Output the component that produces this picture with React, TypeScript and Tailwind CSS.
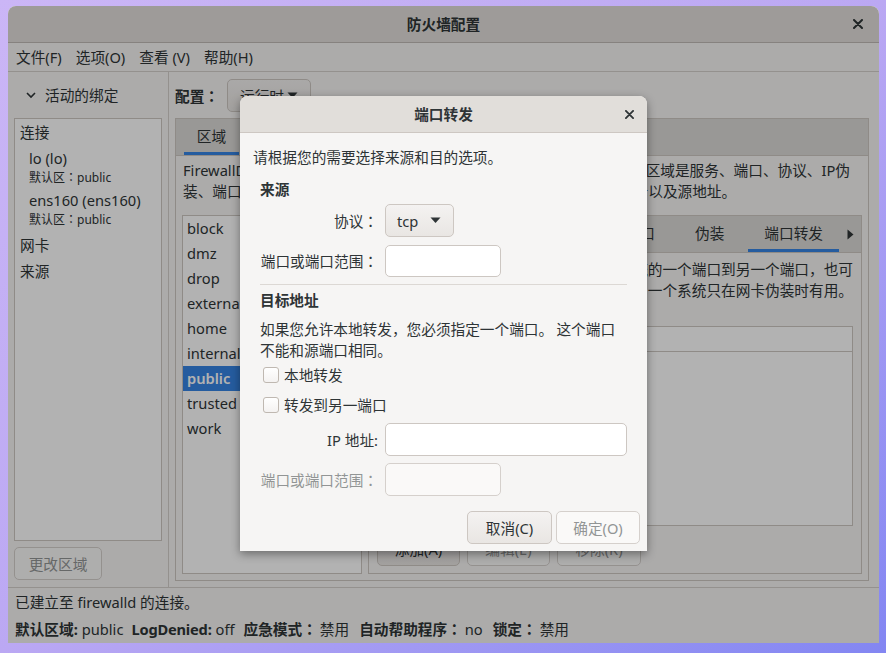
import React from 'react';

const zones = ['block', 'dmz', 'drop', 'external', 'home', 'internal', 'public', 'trusted', 'work'];
const innerTabs = ['服务', '端口', '协议', '源端口', '伪装', '端口转发'];

// labels with a full-width colon: the TC face centres "：" like the reference
const TC = "[font-family:'Noto_Sans_CJK_TC',sans-serif]";
const SC = "[font-family:'Noto_Sans_CJK_SC',sans-serif]";

const CloseIcon: React.FC<{ size?: number }> = ({ size = 10 }) => (
    <svg width={size} height={size} viewBox="0 0 10 10">
        <path d="M1 1 L9 9 M9 1 L1 9" stroke="#2e3436" strokeWidth="2" strokeLinecap="round" />
    </svg>
);

const DownTriangle: React.FC = () => (
    <svg width="11" height="7" viewBox="0 0 11 7">
        <path d="M0.5 0.5 L10.5 0.5 L5.5 6 Z" fill="#2e3436" />
    </svg>
);

const Button: React.FC<{ label: string; disabled?: boolean; className?: string }> = ({ label, disabled, className }) => (
    <div
        className={`flex shrink-0 items-center justify-center rounded-[5px] border ${disabled
            ? 'border-[#d5d0cc] bg-[#faf9f8] text-[#929595]'
            : 'border-[#cdc7c2] bg-gradient-to-b from-[#f4f2f1] to-[#e9e6e3] text-[#2e3436]'
            } ${className ?? ''}`}
    >
        {label}
    </div>
);

const Checkbox: React.FC<{ label: string }> = ({ label }) => (
    <div className="flex h-[24px] items-center">
        <div className="ml-[3px] h-[16px] w-[16px] rounded-[3px] border border-[#bfb8b1] bg-gradient-to-b from-white to-[#f4f2f1]" />
        <span className="ml-[5px]">{label}</span>
    </div>
);

export default function App() {
    return (
        <div className="relative h-[653px] w-[886px] overflow-hidden bg-gradient-to-br from-[#cbb6f6] via-[#bba8f3] to-[#8386f2] pl-[8px] pt-[6px] text-[14.67px] text-[#2e3436] [font-family:'Noto_Sans','Noto_Sans_CJK_SC',sans-serif]">
            {/* Main window */}
            <div className="relative flex h-[637px] w-[871px] flex-col overflow-hidden rounded-t-[8px] bg-[#f6f5f4]">
                {/* Title bar */}
                <div className="relative flex h-[37px] shrink-0 items-center justify-center border-b border-[#c0bbb6] bg-[#e2dfdb]">
                    <span className="font-bold">防火墙配置</span>
                    <div className="absolute right-[16px] top-[13px]">
                        <CloseIcon />
                    </div>
                </div>

                {/* Menu */}
                <div className="flex h-[29px] shrink-0 items-center gap-[14px] border-b border-[#d5d0cc] pl-[8px]">
                    <span>文件(F)</span>
                    <span>选项(O)</span>
                    <span>查看 (V)</span>
                    <span>帮助(H)</span>
                </div>

                {/* Body */}
                <div className="flex h-[515px] shrink-0">
                    {/* Left pane */}
                    <div className="flex w-[161px] shrink-0 flex-col border-r border-[#d5d0cc]">
                        <div className="flex h-[46px] items-center pl-[18px]">
                            <svg width="10" height="7" viewBox="0 0 10 7">
                                <path d="M1 1 L5 5 L9 1" stroke="#2e3436" strokeWidth="1.6" fill="none" />
                            </svg>
                            <span className="ml-[9px]">活动的绑定</span>
                        </div>
                        <div className="mx-[6px] h-[423px] border border-[#cdc7c2] bg-white pl-[5px] pt-[3px]">
                            <div className="h-[20px] leading-[20px]">连接</div>
                            <div className="mt-[6px] h-[20px] pl-[9px] leading-[20px]">lo (lo)</div>
                            <div className="h-[18px] pl-[9px] text-[12px] leading-[18px]">
                                <span className={TC}>默认区：</span>public
                            </div>
                            <div className="mt-[4px] h-[20px] pl-[9px] leading-[20px]">ens160 (ens160)</div>
                            <div className="h-[18px] pl-[9px] text-[12px] leading-[18px]">
                                <span className={TC}>默认区：</span>public
                            </div>
                            <div className="mt-[7px] h-[20px] leading-[20px]">网卡</div>
                            <div className="mt-[6px] h-[20px] leading-[20px]">来源</div>
                        </div>
                        <Button label="更改区域" disabled className="ml-[6px] mt-[6px] h-[33px] w-[88px]" />
                    </div>

                    {/* Right pane */}
                    <div className="flex min-w-0 flex-1 flex-col pl-[6px] pr-[10px]">
                        <div className="mt-[7px] flex h-[33px] items-center">
                            <span className={`font-bold ${TC}`}>配置：</span>
                            <div className="ml-[8px] flex h-[33px] w-[84px] items-center justify-between rounded-[5px] border border-[#cdc7c2] bg-gradient-to-b from-[#f4f2f1] to-[#e9e6e3] px-[12px]">
                                <span>运行时</span>
                                <DownTriangle />
                            </div>
                        </div>

                        {/* Outer notebook */}
                        <div className="mt-[6px] flex h-[463px] flex-col border border-[#cdc7c2]">
                            <div className="flex h-[37px] shrink-0 border-b border-[#cdc7c2] bg-[#dcdad7]">
                                <div className="ml-[8px] flex w-[55px] flex-col">
                                    <div className="flex flex-1 items-center justify-center">区域</div>
                                    <div className="h-[3px] bg-[#3584e4]" />
                                </div>
                            </div>
                            <div className="flex min-h-0 flex-1 flex-col px-[6px] pb-[6px]">
                                <div className="mt-[4px] h-[21px] overflow-hidden whitespace-nowrap pl-[1px] leading-[21px]">
                                    FirewallD 区域定义了绑定的网络连接、网卡以及源地址的可信任程度。区域是服务、端口、协议、IP伪
                                </div>
                                <div className="h-[21px] overflow-hidden whitespace-nowrap pl-[1px] leading-[21px]">
                                    装、端口转发、ICMP 过滤器以及富规则等的组合。区域可以绑定到网卡以及源地址。
                                </div>
                                <div className="mt-[13px] flex min-h-0 flex-1">
                                    {/* Zone list */}
                                    <div className="w-[180px] shrink-0 border border-[#cdc7c2] bg-white">
                                        {zones.map(z => (
                                            <div
                                                key={z}
                                                className={`h-[25px] pl-[4px] leading-[25px] ${z === 'public' ? 'bg-[#3584e4] font-semibold text-white' : ''}`}
                                            >
                                                {z}
                                            </div>
                                        ))}
                                    </div>

                                    {/* Inner notebook */}
                                    <div className="ml-[6px] flex min-w-0 flex-1 flex-col border border-[#cdc7c2]">
                                        <div className="flex h-[37px] shrink-0 items-stretch justify-end overflow-hidden border-b border-[#cdc7c2] bg-[#dcdad7]">
                                            <div className="flex gap-[8px]">
                                                {innerTabs.map(t => (
                                                    <div key={t} className="flex flex-col whitespace-nowrap">
                                                        <div className="flex flex-1 items-center px-[16px]">{t}</div>
                                                        <div className={`h-[3px] ${t === '端口转发' ? 'bg-[#3584e4]' : ''}`} />
                                                    </div>
                                                ))}
                                            </div>
                                            <div className="flex w-[22px] shrink-0 items-center justify-center">
                                                <svg width="7" height="11" viewBox="0 0 7 11">
                                                    <path d="M0.5 0.5 L6.5 5.5 L0.5 10.5 Z" fill="#2e3436" />
                                                </svg>
                                            </div>
                                        </div>
                                        <div className="flex flex-1 flex-col px-[8px] pb-[7px]">
                                            <div className={`mt-[5px] h-[21px] overflow-hidden whitespace-nowrap text-right leading-[21px] ${SC}`}>
                                                添加条目来转发端口，从本地系统的一个端口到另一个端口，也可
                                            </div>
                                            <div className={`h-[21px] overflow-hidden whitespace-nowrap text-right leading-[21px] ${SC}`}>
                                                以转发到另一个系统。转发到另一个系统只在网卡伪装时有用。
                                            </div>
                                            <div className="mt-[26px] flex h-[200px] flex-col border border-[#cdc7c2] bg-white">
                                                <div className="h-[25px] border-b border-[#cdc7c2]" />
                                            </div>
                                            <div className="mt-[6px] flex gap-[7px]">
                                                <Button label="添加(A)" className="h-[34px] w-[83px]" />
                                                <Button label="编辑(E)" disabled className="h-[34px] w-[83px]" />
                                                <Button label="移除(R)" disabled className="h-[34px] w-[84px]" />
                                            </div>
                                        </div>
                                    </div>
                                </div>
                            </div>
                        </div>
                    </div>
                </div>

                {/* Status */}
                <div className="flex h-[56px] shrink-0 flex-col border-t border-[#d5d0cc] pl-[7px] pt-[4px]">
                    <div className="h-[20px] leading-[20px]">已建立至 firewalld 的连接。</div>
                    <div className="mt-[7px] flex h-[20px] items-center whitespace-nowrap leading-[20px]">
                        <span className="font-bold">默认区域:</span>
                        <span className="ml-[4px]">public</span>
                        <span className="ml-[8px] font-bold tracking-[-0.2px]">LogDenied:</span>
                        <span className="ml-[4px]">off</span>
                        <span className={`ml-[9px] font-bold ${TC}`}>应急模式：</span>
                        <span className="ml-[3px]">禁用</span>
                        <span className={`ml-[10px] font-bold ${TC}`}>自动帮助程序：</span>
                        <span className="ml-[3px]">no</span>
                        <span className={`ml-[10px] font-bold ${TC}`}>锁定：</span>
                        <span className="ml-[3px]">禁用</span>
                    </div>
                </div>

                {/* Modal dim */}
                <div className="pointer-events-none absolute inset-0 bg-black/30" />
            </div>

            {/* Dialog */}
            <div className="absolute left-[240px] top-[96px] flex h-[455px] w-[407px] flex-col overflow-hidden rounded-t-[8px] bg-[#f6f5f4] shadow-[0_3px_10px_rgba(0,0,0,0.4)]">
                <div className="relative flex h-[37px] shrink-0 items-center justify-center border-b border-[#cdc7c2] bg-[#e1deda]">
                    <span className="font-bold">端口转发</span>
                    <div className="absolute right-[13px] top-[14px]">
                        <CloseIcon size={9} />
                    </div>
                </div>
                <div className="flex flex-col px-[20px]">
                    <div className="-ml-[7px] mt-[14px] h-[20px] leading-[20px]">请根据您的需要选择来源和目的选项。</div>
                    <div className="mt-[12px] h-[20px] font-bold leading-[20px]">来源</div>

                    <div className="mt-[5px] grid grid-cols-[118px_1fr] items-center gap-x-[7px] gap-y-[8px]">
                        <div className={`text-right ${TC}`}>协议：</div>
                        <div className="flex h-[33px] w-[69px] items-center justify-between rounded-[5px] border border-[#cdc7c2] bg-gradient-to-b from-[#f4f2f1] to-[#e9e6e3] pl-[11px] pr-[12px]">
                            <span>tcp</span>
                            <DownTriangle />
                        </div>
                        <div className={`text-right ${TC}`}>端口或端口范围：</div>
                        <div className="h-[32px] w-[116px] rounded-[5px] border border-[#cdc7c2] bg-white" />
                    </div>

                    <div className="mt-[7px] h-px bg-[#dcd8d4]" />
                    <div className="mt-[5px] h-[20px] font-bold leading-[20px]">目标地址</div>
                    <div className={`mt-[8px] leading-[21px] ${SC}`}>
                        如果您允许本地转发，您必须指定一个端口。 这个端口<br />不能和源端口相同。
                    </div>

                    <div className="mt-[3px]">
                        <Checkbox label="本地转发" />
                    </div>
                    <div className="mt-[6px]">
                        <Checkbox label="转发到另一端口" />
                    </div>

                    <div className="mt-[6px] grid grid-cols-[118px_1fr] items-center gap-x-[7px] gap-y-[7px]">
                        <div className="text-right">IP 地址:</div>
                        <div className="h-[33px] rounded-[5px] border border-[#cdc7c2] bg-white" />
                        <div className={`text-right text-[#929595] ${TC}`}>端口或端口范围：</div>
                        <div className="h-[33px] w-[116px] rounded-[5px] border border-[#d5d0cc] bg-[#faf9f8]" />
                    </div>

                    <div className="mt-[15px] flex justify-end gap-[4px]">
                        <Button label="取消(C)" className="h-[33px] w-[85px]" />
                        <Button label="确定(O)" disabled className="-mr-[13px] h-[33px] w-[84px]" />
                    </div>
                </div>
            </div>
        </div>
    );
}
